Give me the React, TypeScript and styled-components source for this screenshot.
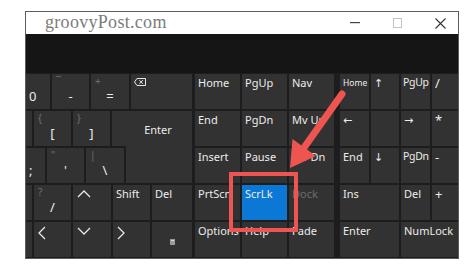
import React from "react";
import styled, { createGlobalStyle, css } from "styled-components";

const Global = createGlobalStyle`
  html, body { margin: 0; padding: 0; background: #ffffff; }
  body { width: 474px; height: 267px; overflow: hidden; }
`;

const Page = styled.div`
  position: relative;
  width: 474px;
  height: 267px;
  padding: 11px 0 0 25px;
  box-sizing: border-box;
`;

const Window = styled.div`
  width: 434px;
  height: 248px;
  box-sizing: border-box;
  border: 1px solid #5c5c5c;
  display: flex;
  flex-direction: column;
  background: #1c1c1c;
`;

const TitleBar = styled.div`
  height: 22px;
  background: #ffffff;
  display: flex;
  align-items: center;
`;

const Title = styled.div`
  padding-left: 19px;
  font-family: "Liberation Serif", "Times New Roman", serif;
  font-size: 18px;
  letter-spacing: 0.3px;
  color: #7c7c7c;
  line-height: 22px;
  margin-top: -2px;
`;

const Controls = styled.div`
  margin-left: auto;
  display: flex;
  align-items: center;
  gap: 33px;
  padding-right: 12px;
`;

const Band = styled.div`
  height: 39px;
  background: #151515;
`;

const Keyboard = styled.div`
  flex: 1;
  display: flex;
  padding: 1px 0 1px 0;
  background: #1d1d1d;
`;

const Section = styled.div<{ $w: number; $ml: number }>`
  width: ${(p) => p.$w}px;
  margin-left: ${(p) => p.$ml}px;
  display: flex;
  flex-direction: column;
  gap: 2px;
`;

const Row = styled.div`
  height: 35px;
  display: flex;
  gap: 2px;
`;

const Key = styled.div<{ $w?: number; $blue?: boolean; $join?: boolean; $tight?: boolean }>`
  ${(p) => (p.$w ? css`width: ${p.$w}px; flex: none;` : css`flex: 1;`)}
  height: 35px;
  box-sizing: border-box;
  background: ${(p) => (p.$blue ? "#0b78d6" : "#323232")};
  display: flex;
  flex-direction: column;
  padding: 1px ${(p) => (p.$tight ? 1 : 3)}px 0 ${(p) => (p.$tight ? 2 : 3)}px;
  overflow: hidden;
  font-family: "Noto Sans", "Open Sans", "DejaVu Sans", sans-serif;
  color: #ececec;
  ${(p) =>
    p.$join &&
    css`
      margin-top: -2px;
      height: 37px;
    `}
`;

const Label = styled.span<{ $dim?: boolean; $small?: boolean; $narrow?: boolean }>`
  font-size: ${(p) => (p.$small ? 8.5 : p.$narrow ? 10.5 : 11)}px;
  line-height: ${(p) => (p.$small ? 16 : 15)}px;
  letter-spacing: ${(p) => (p.$narrow ? -0.3 : 0)}px;
  white-space: nowrap;
  color: ${(p) => (p.$dim ? "#6c6c6c" : "#ececec")};
`;

const Shift = styled.span`
  font-size: 10px;
  line-height: 13px;
  color: #707070;
  padding-left: 1px;
`;

const Main = styled.span<{ $left?: boolean }>`
  font-size: 13px;
  line-height: 15px;
  align-self: ${(p) => (p.$left ? "flex-start" : "center")};
  margin-top: 1px;
`;

const Centered = styled.div`
  flex: 1;
  display: flex;
  align-items: center;
  justify-content: center;
  padding-left: 12px;
  font-size: 11px;
`;

const IconBox = styled.div<{ $center?: boolean }>`
  display: flex;
  justify-content: ${(p) => (p.$center ? "center" : "flex-start")};
  padding-top: ${(p) => (p.$center ? 16 : 3)}px;
`;

const Arrow = styled.span`
  font-family: "DejaVu Sans", sans-serif;
  font-size: 11px;
  line-height: 18px;
`;

const Overlay = styled.svg`
  position: absolute;
  left: 0;
  top: 0;
  pointer-events: none;
`;

const Chevron = ({ d }: { d: string }) => (
  <svg width="16" height="12" viewBox="0 0 16 12">
    <polyline points={d} fill="none" stroke="#e8e8e8" strokeWidth="1.3" />
  </svg>
);

export default function App() {
  return (
    <>
      <Global />
      <Page>
        <Window>
          <TitleBar>
            <Title>groovyPost.com</Title>
            <Controls>
              <svg width="10" height="2" viewBox="0 0 10 2">
                <rect x="0" y="0" width="10" height="1.2" fill="#444" />
              </svg>
              <svg width="9" height="10" viewBox="0 0 9 10">
                <rect x="0.5" y="0.5" width="8" height="9" fill="none" stroke="#c4c4c4" />
              </svg>
              <svg width="11" height="11" viewBox="0 0 11 11">
                <path d="M0.5 0.5 L10.5 10.5 M10.5 0.5 L0.5 10.5" stroke="#333" strokeWidth="1.1" />
              </svg>
            </Controls>
          </TitleBar>
          <Band />
          <Keyboard>
            <Section $w={166} $ml={0}>
              <Row>
                <Key $w={24}>
                  <Shift>&nbsp;</Shift>
                  <Main $left>0</Main>
                </Key>
                <Key $w={37}>
                  <Shift>‾</Shift>
                  <Main>-</Main>
                </Key>
                <Key $w={38}>
                  <Shift>+</Shift>
                  <Main>=</Main>
                </Key>
                <Key>
                  <IconBox>
                    <svg width="12" height="8" viewBox="0 0 12 8">
                      <path d="M3 0.5 H11.5 V7.5 H3 L0.5 4 Z" fill="none" stroke="#e8e8e8" strokeWidth="1" />
                      <path d="M5.5 2.2 L8.8 5.8 M8.8 2.2 L5.5 5.8" stroke="#e8e8e8" strokeWidth="1" />
                    </svg>
                  </IconBox>
                </Key>
              </Row>
              <Row>
                <Key $w={5} />
                <Key $w={37}>
                  <Shift>{"{"}</Shift>
                  <Main>[</Main>
                </Key>
                <Key $w={37}>
                  <Shift>{"}"}</Shift>
                  <Main>]</Main>
                </Key>
                <Key>
                  <Centered>Enter</Centered>
                </Key>
              </Row>
              <Row>
                <Key $w={19}>
                  <Shift>&nbsp;</Shift>
                  <Main $left>;</Main>
                </Key>
                <Key $w={37}>
                  <Shift>"</Shift>
                  <Main>'</Main>
                </Key>
                <Key $w={38}>
                  <Shift>|</Shift>
                  <Main>\</Main>
                </Key>
                <Key $join />
              </Row>
              <Row>
                <Key $w={5} />
                <Key $w={37}>
                  <Shift>?</Shift>
                  <Main>/</Main>
                </Key>
                <Key $w={38}>
                  <IconBox>
                    <Chevron d="2,8 8,2 14,8" />
                  </IconBox>
                </Key>
                <Key $w={37}>
                  <Label>Shift</Label>
                </Key>
                <Key>
                  <Label>Del</Label>
                </Key>
              </Row>
              <Row>
                <Key $w={5} />
                <Key $w={37}>
                  <IconBox>
                    <svg width="10" height="14" viewBox="0 0 10 14">
                      <polyline points="8,1 2,7 8,13" fill="none" stroke="#e8e8e8" strokeWidth="1.3" />
                    </svg>
                  </IconBox>
                </Key>
                <Key $w={38}>
                  <IconBox>
                    <Chevron d="2,2 8,8 14,2" />
                  </IconBox>
                </Key>
                <Key $w={37}>
                  <IconBox>
                    <svg width="10" height="14" viewBox="0 0 10 14">
                      <polyline points="2,1 8,7 2,13" fill="none" stroke="#e8e8e8" strokeWidth="1.3" />
                    </svg>
                  </IconBox>
                </Key>
                <Key>
                  <IconBox $center>
                    <svg width="5" height="6" viewBox="0 0 5 6">
                      <rect x="0" y="0" width="5" height="6" fill="#9a9a9a" />
                      <rect x="1" y="1" width="3" height="1" fill="#d8d8d8" />
                    </svg>
                  </IconBox>
                </Key>
              </Row>
            </Section>

            <Section $w={139} $ml={3}>
              <Row>
                <Key $w={45}><Label>Home</Label></Key>
                <Key $w={45}><Label>PgUp</Label></Key>
                <Key><Label>Nav</Label></Key>
              </Row>
              <Row>
                <Key $w={45}><Label>End</Label></Key>
                <Key $w={45}><Label>PgDn</Label></Key>
                <Key><Label>Mv Up</Label></Key>
              </Row>
              <Row>
                <Key $w={45}><Label>Insert</Label></Key>
                <Key $w={45}><Label>Pause</Label></Key>
                <Key><Label>Mv Dn</Label></Key>
              </Row>
              <Row>
                <Key $w={45}><Label>PrtScn</Label></Key>
                <Key $w={45} $blue><Label>ScrLk</Label></Key>
                <Key><Label $dim>Dock</Label></Key>
              </Row>
              <Row>
                <Key $w={45}><Label>Options</Label></Key>
                <Key $w={45}><Label>Help</Label></Key>
                <Key><Label>Fade</Label></Key>
              </Row>
            </Section>

            <Section $w={118} $ml={6}>
              <Row>
                <Key $w={29}><Label $small>Home</Label></Key>
                <Key $w={28}><Arrow>↑</Arrow></Key>
                <Key $w={29} $tight><Label $narrow>PgUp</Label></Key>
                <Key><Main $left>/</Main></Key>
              </Row>
              <Row>
                <Key $w={29}><Arrow>←</Arrow></Key>
                <Key $w={28} />
                <Key $w={29}><Arrow>→</Arrow></Key>
                <Key><Main $left>*</Main></Key>
              </Row>
              <Row>
                <Key $w={29}><Label>End</Label></Key>
                <Key $w={28}><Arrow>↓</Arrow></Key>
                <Key $w={29} $tight><Label $narrow>PgDn</Label></Key>
                <Key><Main $left>-</Main></Key>
              </Row>
              <Row>
                <Key $w={59}><Label>Ins</Label></Key>
                <Key $w={29}><Label>Del</Label></Key>
                <Key><Main $left>+</Main></Key>
              </Row>
              <Row>
                <Key $w={59}><Label>Enter</Label></Key>
                <Key><Label>NumLock</Label></Key>
              </Row>
            </Section>
          </Keyboard>
        </Window>
        <Overlay width="474" height="267" viewBox="0 0 474 267">
          <rect x="231" y="174" width="65" height="56" fill="none" stroke="#ef5550" strokeWidth="4" />
          <line x1="342" y1="94" x2="301" y2="152" stroke="#ef5550" strokeWidth="7" strokeLinecap="round" />
          <polygon points="290,168 292.5,139 316,156" fill="#ef5550" />
        </Overlay>
      </Page>
    </>
  );
}
